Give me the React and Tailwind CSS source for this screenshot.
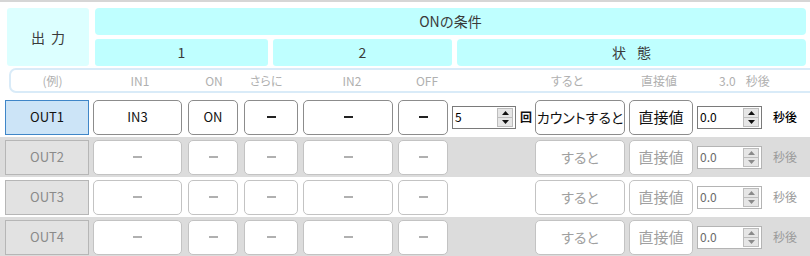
import React from "react";

const FONT = "font-['Noto_Sans_CJK_JP','Noto_Sans',sans-serif]";

function Btn({ w, children, disabled, extra = "" }) {
  return (
    <div
      className={`flex h-[35px] shrink-0 items-center justify-center rounded-[5px] border bg-white text-[13px] ${w} ${
        disabled ? "border-[#c3c3c3] text-[#a0a0a0]" : "border-[#8c8c8c] text-[#111]"
      } ${extra}`}
    >
      {children}
    </div>
  );
}

function Dash({ disabled }) {
  return (
    <span
      className={`block h-[1.5px] w-[9px] ${disabled ? "bg-[#b0b0b0]" : "bg-[#222]"}`}
    />
  );
}

function Spin({ value, w, disabled }) {
  const arrow = disabled ? "#8a8a8a" : "#111";
  return (
    <div
      className={`flex h-[23px] shrink-0 items-center border bg-white ${w} ${
        disabled ? "border-[#b4b4b4]" : "border-[#7a7a7a]"
      }`}
    >
      <span
        className={`pl-[2px] text-[12px] leading-none ${
          disabled ? "text-[#6a6a6a]" : "text-black"
        }`}
      >
        {value}
      </span>
      <div className="ml-auto mr-[2px] flex h-[19px] w-[16px] flex-col border border-[#bdbdbd] bg-[#e6e6e6]">
        <div className="flex flex-1 items-center justify-center border-b border-[#bdbdbd]">
          <svg width="7" height="4" viewBox="0 0 7 4">
            <polygon points="3.5,0 7,4 0,4" fill={arrow} />
          </svg>
        </div>
        <div className="flex flex-1 items-center justify-center">
          <svg width="7" height="4" viewBox="0 0 7 4">
            <polygon points="0,0 7,0 3.5,4" fill={arrow} />
          </svg>
        </div>
      </div>
    </div>
  );
}

function Row({ n, first, gray }) {
  const d = !first;
  return (
    <div className={`flex h-[40px] items-center ${gray ? "bg-[#dcdcdc]" : "bg-white"}`}>
      <div
        className={`ml-[5px] flex h-[35px] w-[84px] shrink-0 items-center justify-center border text-[13px] ${
          first
            ? "border-[#3f86c8] bg-[#cce4f7] text-[#111]"
            : "border-[#b6b6b6] bg-[#e2e2e2] text-[#8a8a8a]"
        }`}
      >
        OUT{n}
      </div>
      <Btn w="w-[89px] ml-[4px]" disabled={d}>
        {first ? "IN3" : <Dash disabled />}
      </Btn>
      <Btn w="w-[50px] ml-[6px]" disabled={d}>
        {first ? "ON" : <Dash disabled />}
      </Btn>
      <Btn w="w-[54px] ml-[6px]" disabled={d}>
        <Dash disabled={d} />
      </Btn>
      <Btn w="w-[90px] ml-[5px]" disabled={d}>
        <Dash disabled={d} />
      </Btn>
      <Btn w="w-[50px] ml-[5px]" disabled={d}>
        <Dash disabled={d} />
      </Btn>
      {first ? (
        <>
          <div className="ml-[4px]">
            <Spin value="5" w="w-[64px]" />
          </div>
          <span className="ml-[4px] w-[15px] shrink-0 text-[12px] font-bold leading-none text-[#111]">
            回
          </span>
        </>
      ) : (
        <div className="w-[87px] shrink-0" />
      )}
      <Btn
        w="w-[90px] ml-0"
        disabled={d}
        extra="[font-feature-settings:'palt'] text-[14px]"
      >
        {first ? "カウントすると" : "すると"}
      </Btn>
      <Btn w="w-[64px] ml-[4px]" disabled={d} extra="text-[15px]">
        直接値
      </Btn>
      <div className="ml-[4px]">
        <Spin value="0.0" w="w-[65px]" disabled={d} />
      </div>
      <span
        className={`ml-[11px] text-[12px] [font-feature-settings:'palt'] ${
          first ? "font-medium text-black" : "text-[#9a9a9a]"
        }`}
      >
        秒後
      </span>
    </div>
  );
}

export default function App() {
  return (
    <div className={`h-[256px] w-[810px] overflow-hidden border-t-2 border-[#d6d6d6] bg-white ${FONT}`}>
      {/* header */}
      <div className="mt-[6px] flex h-[58px]">
        <div className="ml-[7px] flex w-[82px] items-center justify-center rounded-[3px] bg-[#dcffff] text-[14px] tracking-[6px] text-[#3a3a3a]">
          <span className="pl-[6px]">出力</span>
        </div>
        <div className="ml-[6px] flex w-[711px] flex-col gap-[4px]">
          <div className="flex h-[27px] items-center justify-center rounded-[4px] bg-[#bfffff] text-[14px] text-[#3a3a3a]">
            ONの条件
          </div>
          <div className="flex h-[27px] gap-[5px] text-[14px] text-[#3a3a3a]">
            <div className="flex w-[173px] items-center justify-center rounded-[3px] bg-[#bfffff]">1</div>
            <div className="flex w-[179px] items-center justify-center rounded-[3px] bg-[#bfffff]">2</div>
            <div className="flex flex-1 items-center justify-center rounded-[4px] bg-[#bfffff] tracking-[11px]">
              <span className="pl-[11px]">状態</span>
            </div>
          </div>
        </div>
      </div>

      {/* legend */}
      <div className="ml-[9px] mt-[2px] flex h-[25px] w-[820px] items-center rounded-l-[7px] border-2 border-[#d9ebf8] text-[12px] text-[#b0b0b0] [font-feature-settings:'palt']">
        <span className="w-[83px] text-center">(例)</span>
        <span className="w-[92px] text-center">IN1</span>
        <span className="w-[56px] text-center">ON</span>
        <span className="w-[48px] text-center">さらに</span>
        <span className="w-[124px] text-center">IN2</span>
        <span className="w-[26px] text-center">OFF</span>
        <span className="w-[93px]" />
        <span className="w-[68px] text-center">すると</span>
        <span className="w-[116px] text-center">直接値</span>
        <span className="pl-[2px]">3.0</span>
        <span className="ml-[10px]">秒後</span>
      </div>

      <div className="mt-[4px]">
        <Row n={1} first />
        <Row n={2} gray />
        <Row n={3} />
        <Row n={4} gray />
      </div>
    </div>
  );
}
